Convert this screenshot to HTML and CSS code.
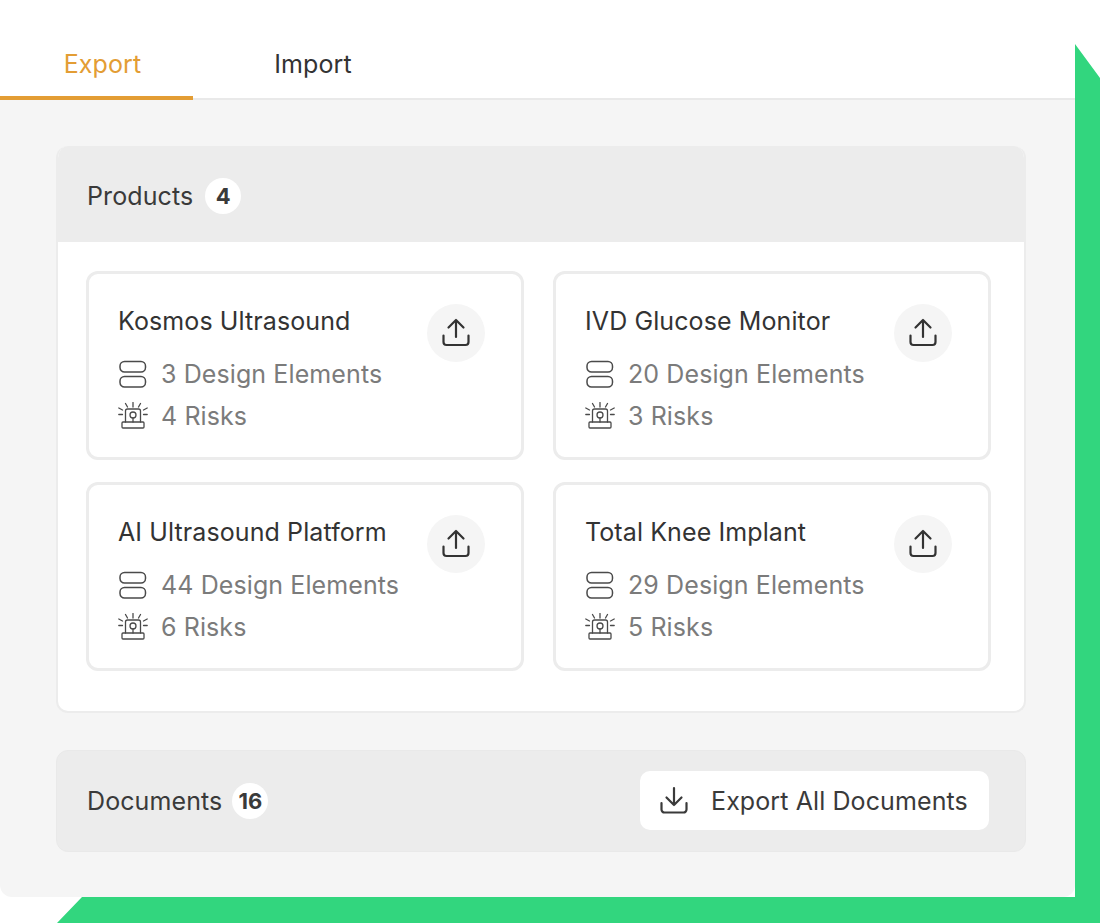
FILE: index.html
```html
<!DOCTYPE html>
<html lang="en">
<head>
    <meta charset="UTF-8">
    <title>Export</title>
    <link rel="stylesheet" href="styles.css">
</head>
<body>
    <svg class="backdrop" width="1100" height="923" viewBox="0 0 1100 923">
        <polygon points="1075,44 1100,78 1100,923 57,923 82,897 1075,897" fill="#32d67e"/>
    </svg>
    <svg width="0" height="0" class="defs">
        <symbol id="i-upload" viewBox="0 0 30 30">
            <path d="M15 2V19M7.500 9.500 15 2l7.500 7.500M2.500 17.500V24a3 3 0 0 0 3 3h19a3 3 0 0 0 3-3v-6.500" fill="none" stroke="currentColor" stroke-width="2.200" stroke-linecap="round" stroke-linejoin="round"/>
        </symbol>
        <symbol id="i-download" viewBox="0 0 30 30">
            <path d="M15 2V19M7.500 11.500 15 19l7.500-7.500M2.500 17V23.500a3 3 0 0 0 3 3h19a3 3 0 0 0 3-3V17" fill="none" stroke="currentColor" stroke-width="2.200" stroke-linecap="round" stroke-linejoin="round"/>
        </symbol>
        <symbol id="i-elements" viewBox="0 0 28 28">
            <g fill="none" stroke="currentColor" stroke-width="1.500">
                <rect x="1" y="1.500" width="25.500" height="10.500" rx="4.500"/>
                <rect x="1" y="16.500" width="25.500" height="10.500" rx="4.500"/>
            </g>
        </symbol>
        <symbol id="i-risk" viewBox="0 0 30 28">
            <g fill="none" stroke="currentColor" stroke-width="1.300" stroke-linecap="round" stroke-linejoin="round">
                <path d="M15 .5v4.500M7.500 1.500l2 3.500M22.500 1.500l-2 3.500M.8 6l3.700 2M29.200 6l-3.700 2M.8 12.500h3.700M25.500 12.500h3.700"/>
                <path d="M7.500 20V9a2 2 0 0 1 2-2h11a2 2 0 0 1 2 2v11"/>
                <rect x="4" y="20" width="22" height="6" rx="1"/>
                <circle cx="15" cy="13" r="3"/>
                <path d="M15 16v4"/>
            </g>
        </symbol>
    </svg>

    <div class="panel">
        <div class="tabs">
            <div class="tab active">Export</div>
            <div class="tab">Import</div>
        </div>
        <div class="content">
            <section class="products">
                <div class="section-head">
                    <span>Products</span>
                    <span class="count">4</span>
                </div>
                <div class="grid">
                    <div class="card">
                        <div class="card-text">
                            <div class="card-title">Kosmos Ultrasound</div>
                            <div class="meta"><svg class="icon-el"><use href="#i-elements"/></svg>3 Design Elements</div>
                            <div class="meta"><svg class="icon-risk"><use href="#i-risk"/></svg>4 Risks</div>
                        </div>
                        <div class="round-btn"><svg><use href="#i-upload"/></svg></div>
                    </div>
                    <div class="card">
                        <div class="card-text">
                            <div class="card-title">IVD Glucose Monitor</div>
                            <div class="meta"><svg class="icon-el"><use href="#i-elements"/></svg>20 Design Elements</div>
                            <div class="meta"><svg class="icon-risk"><use href="#i-risk"/></svg>3 Risks</div>
                        </div>
                        <div class="round-btn"><svg><use href="#i-upload"/></svg></div>
                    </div>
                    <div class="card">
                        <div class="card-text">
                            <div class="card-title">AI Ultrasound Platform</div>
                            <div class="meta"><svg class="icon-el"><use href="#i-elements"/></svg>44 Design Elements</div>
                            <div class="meta"><svg class="icon-risk"><use href="#i-risk"/></svg>6 Risks</div>
                        </div>
                        <div class="round-btn"><svg><use href="#i-upload"/></svg></div>
                    </div>
                    <div class="card">
                        <div class="card-text">
                            <div class="card-title">Total Knee Implant</div>
                            <div class="meta"><svg class="icon-el"><use href="#i-elements"/></svg>29 Design Elements</div>
                            <div class="meta"><svg class="icon-risk"><use href="#i-risk"/></svg>5 Risks</div>
                        </div>
                        <div class="round-btn"><svg><use href="#i-upload"/></svg></div>
                    </div>
                </div>
            </section>
            <section class="documents">
                <div class="docs-label">
                    <span>Documents</span>
                    <span class="count">16</span>
                </div>
                <button class="export-btn"><svg><use href="#i-download"/></svg>Export All Documents</button>
            </section>
        </div>
    </div>
</body>
</html>
```

FILE: styles.css
```css
* {
    margin: 0;
    padding: 0;
    box-sizing: border-box;
}

body {
    position: relative;
    width: 1100px;
    height: 923px;
    overflow: hidden;
    background: white;
    font-family: Inter, 'Liberation Sans', sans-serif;
    letter-spacing: 0.1px;
    color: #3a3a3a;
}

.backdrop {
    position: absolute;
    top: 0;
    left: 0;
}

.defs {
    position: absolute;
}

.panel {
    position: relative;
    width: 1075px;
    height: 897px;
    display: flex;
    flex-direction: column;
    border-radius: 0 0 12px 12px;
    overflow: hidden;
}

/* tabs */
.tabs {
    height: 100px;
    display: flex;
    background: white;
    border-bottom: 2px solid #e9e9e9;
}

.tab {
    width: 193px;
    height: 101px;
    padding-top: 47px;
    text-align: center;
    font-size: 25px;
    line-height: 34px;
    color: #333;
}

.tab + .tab {
    width: 240px;
}

.tab.active {
    color: #e39d34;
    border-bottom: 5px solid #e39d34;
    padding-left: 12px;
}

.content {
    flex: 1;
    background: #f5f5f5;
    padding: 46px 49px 0 56px;
}

/* products */
.products {
    width: 970px;
    height: 567px;
    background: white;
    border: 2px solid #ececec;
    border-top: none;
    border-radius: 12px;
    overflow: hidden;
}

.section-head {
    height: 96px;
    margin: 0 -2px;
    padding: 4px 0 0 31px;
    display: flex;
    align-items: center;
    gap: 12px;
    background: #ececec;
    font-size: 25px;
}

.count {
    min-width: 36px;
    height: 36px;
    border-radius: 18px;
    padding: 0 5px;
    background: white;
    text-align: center;
    font-size: 22px;
    font-weight: 700;
    line-height: 36px;
}

.grid {
    display: grid;
    grid-template-columns: 438px 438px;
    grid-auto-rows: 189px;
    column-gap: 29px;
    row-gap: 22px;
    padding: 29px 0 0 28px;
}

.card {
    display: flex;
    justify-content: space-between;
    padding: 30px 36px 0 29px;
    border: 3px solid #ececec;
    border-radius: 12px;
}

.card-title {
    font-size: 25px;
    line-height: 34px;
    color: #333;
    margin-bottom: 15px;
}

.meta {
    display: flex;
    align-items: center;
    height: 42px;
    font-size: 25px;
    color: #7b7b7b;
}

.icon-el,
.icon-risk {
    flex: none;
    color: #4a4a4a;
}

.icon-el {
    width: 28px;
    height: 28px;
    margin: 0 14px 0 1px;
}

.icon-risk {
    width: 30px;
    height: 28px;
    margin-right: 13px;
}

.round-btn {
    width: 58px;
    height: 58px;
    border-radius: 50%;
    background: #f5f5f5;
    color: #333;
    display: flex;
    align-items: center;
    justify-content: center;
}

.round-btn svg {
    width: 30px;
    height: 30px;
}

/* documents */
.documents {
    width: 970px;
    height: 102px;
    margin-top: 37px;
    padding: 0 36px 0 30px;
    display: flex;
    align-items: center;
    justify-content: space-between;
    background: #ececec;
    border: 1px solid #e9e9e9;
    border-radius: 12px;
    font-size: 25px;
}

.docs-label {
    display: flex;
    align-items: center;
    gap: 10px;
}

.export-btn {
    width: 349px;
    height: 59px;
    margin-bottom: 1px;
    display: flex;
    align-items: center;
    padding: 1px 0 0 19px;
    background: white;
    border: none;
    border-radius: 10px;
    font-family: inherit;
    font-size: 25px;
    letter-spacing: inherit;
    color: #3a3a3a;
}

.export-btn svg {
    width: 30px;
    height: 30px;
    margin-right: 22px;
}
```
